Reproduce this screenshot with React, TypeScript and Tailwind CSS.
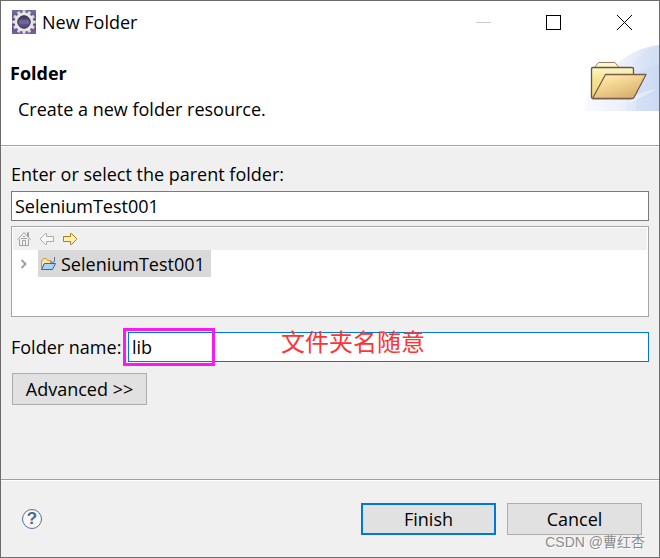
import { useState } from 'react';
import type { ReactNode } from 'react';

function EclipseIcon() {
  const teeth = Array.from({ length: 12 }, (_, i) => i * 30);

  return (
    <svg viewBox="0 0 24 24" className="h-6 w-6 shrink-0" aria-hidden="true">
      <defs>
        <linearGradient id="app-bg" x1="0" y1="0" x2="0" y2="1">
          <stop offset="0" stopColor="#7b6f9a" />
          <stop offset="0.5" stopColor="#55487f" />
          <stop offset="1" stopColor="#7a5ea4" />
        </linearGradient>
        <linearGradient id="app-core" x1="0" y1="0" x2="0" y2="1">
          <stop offset="0" stopColor="#2c2742" />
          <stop offset="0.5" stopColor="#655c91" />
          <stop offset="1" stopColor="#49416f" />
        </linearGradient>
      </defs>
      <rect width="24" height="24" fill="url(#app-bg)" />
      {teeth.map((angle) => (
        <rect key={angle} x="10.500" y="0.300" width="3" height="4" fill="#dedcda" transform={`rotate(${angle} 12 12)`} />
      ))}
      <circle cx="12" cy="12" r="8" fill="url(#app-core)" stroke="#e9e7e5" strokeWidth="3" />
      <circle cx="12" cy="12" r="6.200" fill="none" stroke="#3b3550" />
      <path d="M7 11h10M7 13h10" stroke="#8b83ae" strokeWidth="0.700" />
    </svg>
  );
}

function FolderBanner() {
  return (
    <svg viewBox="0 0 75 66" className="h-[66px] w-[75px] shrink-0" aria-hidden="true">
      <defs>
        <linearGradient id="sky" x1="0" y1="0" x2="1" y2="0">
          <stop offset="0" stopColor="#f8faff" />
          <stop offset="0.6" stopColor="#e9effa" />
          <stop offset="1" stopColor="#d3dff4" />
        </linearGradient>
        <linearGradient id="folder-back" x1="0" y1="0" x2="0" y2="1">
          <stop offset="0" stopColor="#fbf5c8" />
          <stop offset="0.4" stopColor="#f4e48e" />
          <stop offset="1" stopColor="#f2d877" />
        </linearGradient>
        <linearGradient id="folder-front" x1="0" y1="0" x2="0.7" y2="1">
          <stop offset="0" stopColor="#fdf0cd" />
          <stop offset="0.35" stopColor="#f9dc98" />
          <stop offset="1" stopColor="#d2b06b" />
        </linearGradient>
      </defs>
      <path d="M0 66C3 47 12 34 26 25C42 10 56 2 75 0V66Z" fill="url(#sky)" />
      <path d="M46 24C53 11 62 4 75 0V66H42Z" fill="#c9d8f4" opacity="0.2" />
      <path d="M52 30C60 23 67 21 75 20V66H52Z" fill="#bccff2" opacity="0.25" />
      <path d="M46 54C56 48 64 45 72 44C67 48 58 51 46 58Z" fill="#fff" opacity="0.4" />
      <path d="M10.500 22.500L14.500 17.500H31L35 22.500Z" fill="#fcf8cf" stroke="#96806a" />
      <rect x="7.500" y="22.500" width="42" height="31" rx="1.500" fill="url(#folder-back)" stroke="#70503f" strokeWidth="1.300" />
      <path
        d="M21.500 29.500H62L50 52.500Q49.500 53.500 48 53.500H8.500Z"
        fill="url(#folder-front)"
        stroke="#7b5b4c"
        strokeWidth="1.300"
        strokeLinejoin="round"
      />
    </svg>
  );
}

function HomeIcon() {
  return (
    <svg viewBox="0 0 16 16" className="h-4 w-4" fill="none" stroke="#a3a3a3" aria-hidden="true">
      <path d="M1.500 8.500L8 1.500L14.500 8.500M3.500 8V14.500H12.500V8M11.500 5V1.500H12.500V6" />
      <path d="M5 7.500H11M6.500 14V9.500H9.500V14M7 5.500H9" />
    </svg>
  );
}

function ArrowIcon({ right = false }: { right?: boolean }) {
  return (
    <svg viewBox="0 0 16 16" className="h-4 w-4" strokeLinejoin="round" aria-hidden="true">
      {right ? (
        <path d="M1.500 5.500H8.500V2.500H9.500L14.500 7.500V8.500L9.500 13.500H8.500V10.500H1.500Z" fill="#fff0b5" stroke="#b97a10" />
      ) : (
        <path d="M14.500 5.500H7.500V2.500H6.500L1.500 7.500V8.500L6.500 13.500H7.500V10.500H14.500Z" fill="#f8f8f8" stroke="#ababab" />
      )}
    </svg>
  );
}

function ProjectIcon() {
  return (
    <svg viewBox="0 0 16 16" className="h-4 w-4" aria-hidden="true">
      <path d="M1.500 12.500V4.500H2.500L3.500 2.500H6.500L7.500 4.500H10.500V8H4Z" fill="#fbe6a6" stroke="#c39a4d" />
      <path d="M4.500 7.500H15.500L12.500 13.500H1.500Z" fill="#a9d4f5" stroke="#3767a8" strokeLinejoin="round" />
      <path d="M14.500 1V4.500Q14.500 6.500 12.500 6.500Q11 6.500 11 5" fill="none" stroke="#4475b0" />
    </svg>
  );
}

function PushButton({ children, primary = false }: { children: ReactNode; primary?: boolean }) {
  return (
    <button
      type="button"
      className={`flex h-8 w-[135px] items-center justify-center bg-[#e1e1e1] ${
        primary ? 'border-2 border-[#0078d7]' : 'border border-[#adadad]'
      }`}
    >
      {children}
    </button>
  );
}

function TitleBar() {
  return (
    <div className="flex h-[42px] items-center pl-[11px]">
      <EclipseIcon />
      <h1 className="ml-[6px] flex-1">New Folder</h1>
      <div className="flex items-center gap-[55px] pr-[26px]">
        <button type="button" aria-label="Minimize" disabled>
          <svg viewBox="0 0 16 16" className="h-4 w-4" aria-hidden="true">
            <path d="M1 8.500H16" stroke="#cccccc" />
          </svg>
        </button>
        <button type="button" aria-label="Maximize">
          <svg viewBox="0 0 16 16" className="h-4 w-4" aria-hidden="true">
            <rect x="0.500" y="1.500" width="14" height="14" fill="none" stroke="#000" />
          </svg>
        </button>
        <button type="button" aria-label="Close">
          <svg viewBox="0 0 16 16" className="h-4 w-4" aria-hidden="true">
            <path d="M0 1L15 16M15 1L0 16" stroke="#000" />
          </svg>
        </button>
      </div>
    </div>
  );
}

function ParentTree({ project }: { project: string }) {
  return (
    <div className="mt-[5px] h-[91px] border border-[#a5a5aa] bg-white p-px">
      <div className="flex h-[22px] items-center gap-[7px] bg-[#f0f0f0] pl-[3px]">
        <button type="button" aria-label="Home">
          <HomeIcon />
        </button>
        <button type="button" aria-label="Back">
          <ArrowIcon />
        </button>
        <button type="button" aria-label="Forward">
          <ArrowIcon right />
        </button>
      </div>
      <ul>
        <li className="flex h-[27px] items-center">
          <button type="button" aria-label="Expand" className="w-[25px] pl-[7px]">
            <svg viewBox="0 0 8 12" className="h-3 w-2" fill="none" stroke="#a0a0a0" strokeWidth="2" aria-hidden="true">
              <path d="M1.500 2L5.500 6L1.500 10" />
            </svg>
          </button>
          <span className="flex h-full items-center gap-[5px] bg-[#d9d9d9] pr-[6px] pl-[2px]">
            <ProjectIcon />
            {project}
          </span>
        </li>
      </ul>
    </div>
  );
}

export default function App() {
  const [parent, setParent] = useState('SeleniumTest001');
  const [name, setName] = useState('lib');

  return (
    <div className="flex min-h-screen flex-col border border-[#6b6b6b] bg-[#f0f0f0] font-['Open_Sans','Noto_Sans_CJK_SC',sans-serif] text-[18px] leading-6 text-black">
      <header className="border-b border-[#a0a0a0] bg-white">
        <TitleBar />
        <div className="flex h-[102px] justify-between">
          <div className="pt-[18px] pl-[9px]">
            <h2 className="font-bold">Folder</h2>
            <p className="mt-3 pl-2">Create a new folder resource.</p>
          </div>
          <div className="pt-[2px]">
            <FolderBanner />
          </div>
        </div>
      </header>

      <main className="flex-1 border-t border-white px-[10px] pt-[15px]">
        <label htmlFor="parent" className="block">
          Enter or select the parent folder:
        </label>
        <input
          id="parent"
          value={parent}
          onChange={(e) => setParent(e.target.value)}
          className="mt-[5px] block h-[30px] w-full border border-[#7a7a7a] bg-white px-[3px] outline-none"
        />
        <ParentTree project="SeleniumTest001" />

        <div className="relative mt-[15px] flex items-center">
          <label htmlFor="name" className="w-[117px] shrink-0">
            Folder name:
          </label>
          <input
            id="name"
            value={name}
            onChange={(e) => setName(e.target.value)}
            className="h-[30px] min-w-0 flex-1 border border-[#0078d7] bg-white px-[3px] outline-none"
          />
          {/* annotations over the field */}
          <div className="pointer-events-none absolute -top-1 left-[112px] h-[38px] w-[92px] border-[3px] border-[#f81af0]" />
          <span className="pointer-events-none absolute -top-[7px] left-[270px] font-['Noto_Sans_CJK_SC',sans-serif] text-[24px] leading-8 text-[#ff3333]">
            文件夹名随意
          </span>
        </div>

        <div className="mt-[11px] pl-px">
          <PushButton>Advanced &gt;&gt;</PushButton>
        </div>
      </main>

      <footer className="border-t border-[#a0a0a0]">
        <div className="relative flex h-[77px] items-center justify-end gap-[11px] border-t border-white pr-[17px] pl-[21px]">
          <button
            type="button"
            aria-label="Help"
            className="mr-auto flex h-5 w-5 items-center justify-center rounded-full border border-[#5b6f94] bg-[#f8f8f8] font-['Liberation_Sans',sans-serif] text-[17px] font-bold text-[#4e658c]"
          >
            ?
          </button>
          <PushButton primary>Finish</PushButton>
          <PushButton>Cancel</PushButton>
          <span className="pointer-events-none absolute right-[14px] bottom-[5px] font-['Liberation_Sans','Noto_Sans_CJK_SC',sans-serif] text-[14px] leading-5 text-[#8c8c8c] [text-shadow:1px_1px_0_#fff]">
            CSDN @曹红杏
          </span>
        </div>
      </footer>
    </div>
  );
}
